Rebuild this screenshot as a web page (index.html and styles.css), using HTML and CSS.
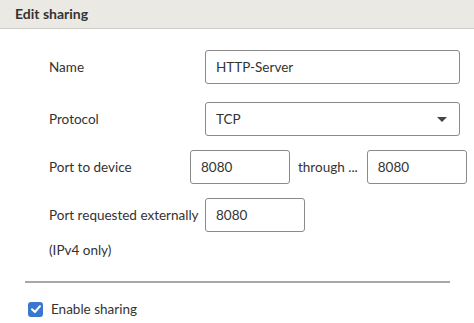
FILE: index.html
```html
<!DOCTYPE html>
<html lang="en">
<head>
    <meta charset="UTF-8">
    <meta name="viewport" content="width=device-width, initial-scale=1.0">
    <title>Edit sharing</title>
    <link rel="stylesheet" href="styles.css">
</head>
<body>
    <div class="dialog">
        <div class="dialog-header">Edit sharing</div>
        <div class="dialog-body">
            <div class="row row-first">
                <label class="label label-wide">Name</label>
                <div class="field field-wide">HTTP-Server</div>
            </div>
            <div class="row">
                <label class="label label-wide">Protocol</label>
                <div class="field field-wide select">
                    <span>TCP</span>
                    <span class="caret"></span>
                </div>
            </div>
            <div class="row">
                <label class="label label-port">Port to device</label>
                <div class="field field-small">8080</div>
                <span class="through">through ...</span>
                <div class="field field-small">8080</div>
            </div>
            <div class="row row-last">
                <label class="label label-wide">Port requested externally</label>
                <div class="field field-small">8080</div>
            </div>
            <div class="note">(IPv4 only)</div>
            <hr class="divider">
            <div class="check-row">
                <span class="checkbox">
                    <svg width="12" height="12" viewBox="0 0 12 12">
                        <path d="M2 6.2 L4.9 9 L10 3.2" fill="none" stroke="#fff" stroke-width="2" stroke-linecap="round" stroke-linejoin="round"/>
                    </svg>
                </span>
                <span>Enable sharing</span>
            </div>
        </div>
    </div>
</body>
</html>
```

FILE: styles.css
```css
body {
    margin: 0;
    font-family: "Lato", "Open Sans", sans-serif;
    font-size: 13.5px;
    color: #333;
    background-color: #fff;
}

.dialog-header {
    height: 28px;
    line-height: 28px;
    padding-left: 15px;
    background-color: #ebe9e3;
    border-bottom: 1px solid #cfcdc8;
    font-size: 14px;
    font-weight: bold;
    color: #333;
}

.dialog-body {
    padding: 21px 0 0 49px;
}

.row {
    display: flex;
    align-items: center;
    height: 34px;
    margin-bottom: 14px;
}

.row-first {
    margin-bottom: 18px;
}

.row-last {
    margin-bottom: 10px;
}

.label {
    white-space: nowrap;
}

.label-wide {
    width: 156px;
}

.label-port {
    width: 141px;
}

.field {
    box-sizing: border-box;
    height: 34px;
    line-height: 32px;
    padding: 0 10px;
    border: 1px solid #8a8a8a;
    border-radius: 3px;
    background-color: #fff;
}

.field-wide {
    width: 255px;
}

.field-small {
    width: 100px;
}

.select {
    display: flex;
    justify-content: space-between;
    align-items: center;
}

.caret {
    width: 0;
    height: 0;
    border-left: 5px solid transparent;
    border-right: 5px solid transparent;
    border-top: 5px solid #444;
    margin-right: 2px;
}

.through {
    margin: 0 9px 0 8px;
}

.note {
    line-height: 16px;
}

.divider {
    border: none;
    border-top: 2px solid #a8a8a8;
    margin: 23px 24px 0 -24px;
}

.check-row {
    display: flex;
    align-items: center;
    margin: 18px 0 0 -21px;
}

.checkbox {
    display: flex;
    align-items: center;
    justify-content: center;
    width: 15px;
    height: 15px;
    border-radius: 3px;
    background-color: #3a78cf;
    margin-right: 8px;
}
```
